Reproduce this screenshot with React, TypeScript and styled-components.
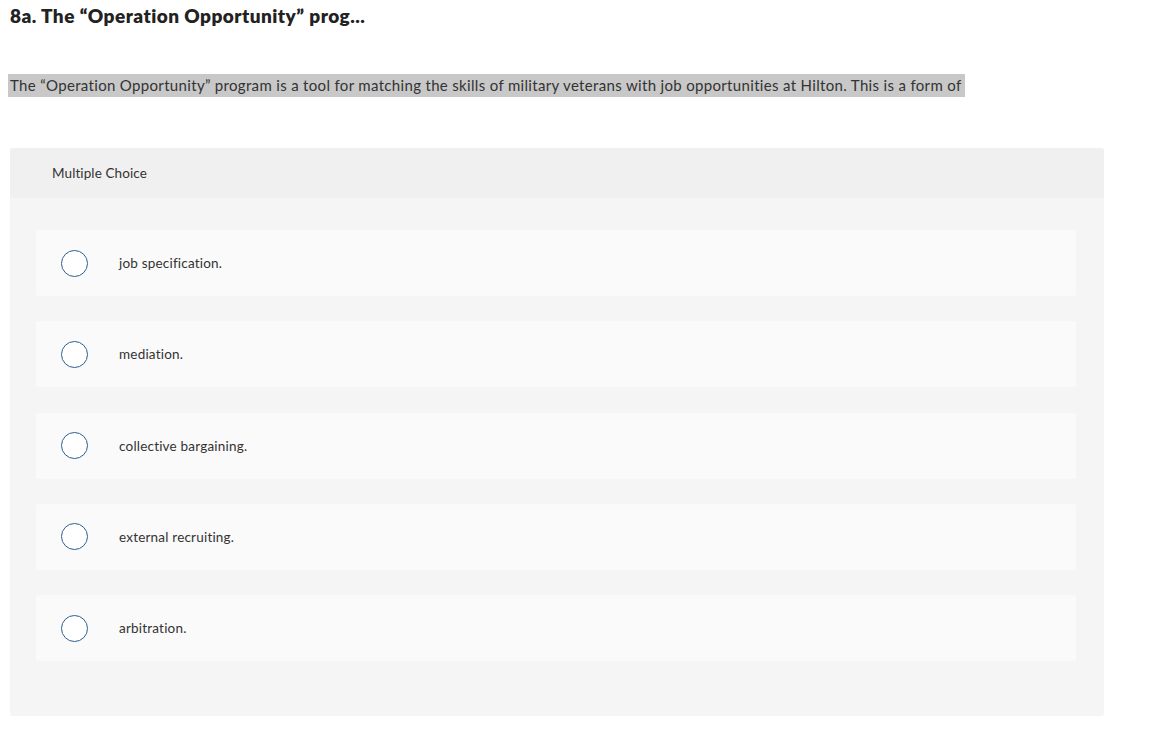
import React from 'react';
import styled, { createGlobalStyle } from 'styled-components';

const GlobalStyle = createGlobalStyle`
  body {
    margin: 0;
    background: #fff;
    font-family: Lato, "Open Sans", Arial, sans-serif;
    color: #1a1a1a;
  }
`;

const Page = styled.div`
  width: 1164px;
  padding: 5px 60px 0 10px;
  box-sizing: border-box;
`;

const Title = styled.h1`
  margin: 0;
  font-size: 19px;
  font-weight: 800;
  letter-spacing: 0.45px;
  color: #222;
  line-height: 22px;
`;

const Prompt = styled.p`
  margin: 47px 0 0 -2px;
  font-size: 15px;
  letter-spacing: 0.33px;
  line-height: 23px;
`;

const Highlight = styled.span`
  display: inline-block;
  background: #c8c8c8;
  color: #333;
  padding: 0 4px 0 2px;
`;

const Card = styled.section`
  margin-top: 51px;
  background: #f5f5f5;
  border-radius: 3px;
  overflow: hidden;
`;

const CardHeader = styled.div`
  height: 50px;
  background: #f0f0f0;
  display: flex;
  align-items: center;
  padding-left: 42px;
  font-size: 13.5px;
  letter-spacing: 0.1px;
  color: #333;
`;

const OptionList = styled.div`
  display: flex;
  flex-direction: column;
  gap: 25.25px;
  padding: 32px 28px 55px 26px;
`;

const Option = styled.label`
  height: 66px;
  display: flex;
  align-items: center;
  background: #fafafa;
  border-radius: 3px;
  padding-left: 25px;
  font-size: 13.5px;
  letter-spacing: 0.2px;
  color: #333;
  cursor: pointer;
`;

const Radio = styled.span`
  width: 25px;
  height: 25px;
  border: 1.5px solid #2d5f8f;
  border-radius: 50%;
  background: #fff;
  flex-shrink: 0;
  margin-right: 31px;
`;

const options = [
  'job specification.',
  'mediation.',
  'collective bargaining.',
  'external recruiting.',
  'arbitration.',
];

export default function App() {
  return (
    <>
      <GlobalStyle />
      <Page>
        <Title>8a. The “Operation Opportunity” prog...</Title>
        <Prompt>
          <Highlight>
            The “Operation Opportunity” program is a tool for matching the skills of military veterans with job opportunities at Hilton. This is a form of
          </Highlight>
        </Prompt>
        <Card>
          <CardHeader>Multiple Choice</CardHeader>
          <OptionList>
            {options.map((o) => (
              <Option key={o}>
                <Radio />
                {o}
              </Option>
            ))}
          </OptionList>
        </Card>
      </Page>
    </>
  );
}
